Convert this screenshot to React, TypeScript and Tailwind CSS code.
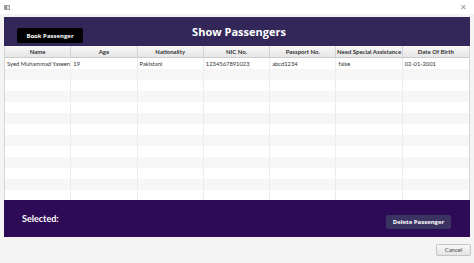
import React from 'react';

const columns = ['Name', 'Age', 'Nationality', 'NIC No.', 'Passport No.', 'Need Special Assistance', 'Date Of Birth'];

const passengers = [
  ['Syed Muhammad Yaseen', '19', 'Pakistani', '1234567891023', 'abcd1234', 'false', '02-01-2001'],
];

const font = { fontFamily: 'Lato, "Open Sans", sans-serif' };
const openSans = { fontFamily: '"Open Sans", "Noto Sans", sans-serif' };

export default function App() {
  const rows = Array.from({ length: 13 }, (_, i) => passengers[i] || null);

  return (
    <div className="w-[474px] h-[263px] bg-[#f4f4f4] flex flex-col overflow-hidden" style={font}>
      {/* Window title bar */}
      <div className="h-[14px] bg-white flex items-center justify-between px-[4px] shrink-0">
        <div className="w-[6px] h-[5px] border border-[#9aa0a8] bg-[#e4e6ea] flex">
          <div className="w-[2px] h-full bg-[#8a8f98]" />
        </div>
        <span className="text-[8px] leading-none text-[#9a9a9a] mr-[3px]">✕</span>
      </div>

      <div className="flex-1 flex flex-col px-[4px] pt-[3px] min-h-0">
        {/* Header */}
        <div className="h-[29px] bg-[#33275a] grid grid-cols-[1fr_auto_1fr] items-center shrink-0">
          <div>
            <button style={openSans} className="ml-[13px] w-[66px] h-[15px] bg-black text-white text-[6px] font-bold leading-none rounded-[2px]">
              Book Passenger
            </button>
          </div>
          <h1 style={openSans} className="text-white text-[11px] font-bold leading-none pl-[4px]">Show Passengers</h1>
          <div />
        </div>

        {/* Table */}
        <div className="flex-1 flex flex-col border-x border-[#d6d6d6] bg-white min-h-0">
          <div className="h-[12px] grid grid-cols-7 bg-gradient-to-b from-[#f8f8f8] to-[#e6e6e6] border-b border-[#cccccc] shrink-0">
            {columns.map(c => (
              <div key={c} className="flex items-center justify-center text-[6px] font-bold text-[#333] border-r border-[#d4d4d4] last:border-r-0 leading-none whitespace-nowrap">
                {c}
              </div>
            ))}
          </div>
          <div className="flex-1 overflow-hidden">
            {rows.map((row, i) => (
              <div key={i} className={`h-[11px] grid grid-cols-7 ${i % 2 === 0 ? 'bg-white' : 'bg-[#f6f6f6]'}`}>
                {columns.map((c, j) => (
                  <div key={c} className="flex items-center pl-[2px] text-[5.8px] text-[#333] border-r border-[#ececec] last:border-r-0 leading-none whitespace-nowrap overflow-hidden">
                    {row ? row[j] : ''}
                  </div>
                ))}
              </div>
            ))}
          </div>
        </div>

        {/* Bottom bar */}
        <div className="h-[37px] bg-[#2e0b56] flex items-center justify-between pl-[18px] pr-[19px] shrink-0">
          <span className="text-white text-[9px] font-bold leading-none">Selected:</span>
          <button style={openSans} className="mt-[7px] w-[65px] h-[14px] bg-[#3b3361] text-white text-[6px] font-bold leading-none rounded-[2px]">
            Delete Passenger
          </button>
        </div>

        {/* Footer */}
        <div className="h-[26px] flex items-center justify-end shrink-0">
          <button className="w-[35px] h-[12px] bg-gradient-to-b from-[#f8f8f8] to-[#e4e4e4] border border-[#c4c4c4] text-[6px] text-[#444] leading-none rounded-[2px] mr-[-1px]">
            Cancel
          </button>
        </div>
      </div>
    </div>
  );
}
